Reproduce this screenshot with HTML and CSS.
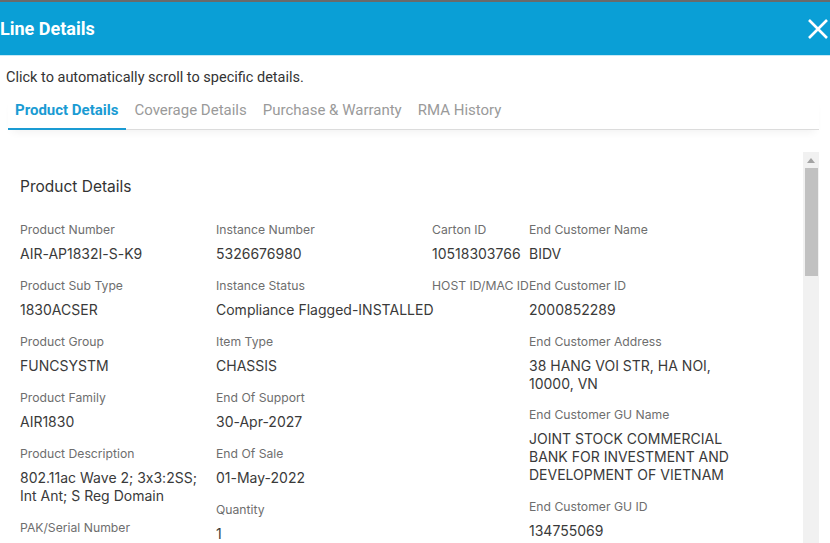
FILE: index.html
```html
<!DOCTYPE html>
<html>
<head>
<meta charset="utf-8">
<link rel="stylesheet" href="styles.css">
</head>
<body>
<div class="topbar"></div>
<header class="header">
  <h1 class="title">Line Details</h1>
  <svg class="close" width="22" height="22" viewBox="0 0 22 22"><path d="M2 2 L20 20 M20 2 L2 20" stroke="#fff" stroke-width="2.6" fill="none"/></svg>
</header>
<p class="intro">Click to automatically scroll to specific details.</p>
<nav class="tabs">
  <span class="tab active">Product Details</span>
  <span class="tab">Coverage Details</span>
  <span class="tab">Purchase &amp; Warranty</span>
  <span class="tab">RMA History</span>
</nav>
<div class="pane">
  <div class="content">
    <h2 class="section">Product Details</h2>
    <div class="grid">
      <div class="col c1">
        <div class="item"><div class="label">Product Number</div><div class="value">AIR-AP1832I-S-K9</div></div>
        <div class="item"><div class="label">Product Sub Type</div><div class="value">1830ACSER</div></div>
        <div class="item"><div class="label">Product Group</div><div class="value">FUNCSYSTM</div></div>
        <div class="item"><div class="label">Product Family</div><div class="value">AIR1830</div></div>
        <div class="item"><div class="label">Product Description</div><div class="value">802.11ac Wave 2; 3x3:2SS; Int Ant; S Reg Domain</div></div>
        <div class="item"><div class="label">PAK/Serial Number</div><div class="value"></div></div>
      </div>
      <div class="col c2">
        <div class="item"><div class="label">Instance Number</div><div class="value">5326676980</div></div>
        <div class="item"><div class="label">Instance Status</div><div class="value nowrap">Compliance Flagged-INSTALLED</div></div>
        <div class="item"><div class="label">Item Type</div><div class="value">CHASSIS</div></div>
        <div class="item"><div class="label">End Of Support</div><div class="value">30-Apr-2027</div></div>
        <div class="item"><div class="label">End Of Sale</div><div class="value">01-May-2022</div></div>
        <div class="item"><div class="label">Quantity</div><div class="value">1</div></div>
      </div>
      <div class="col c3">
        <div class="item"><div class="label">Carton ID</div><div class="value">10518303766</div></div>
        <div class="item"><div class="label nowrap">HOST ID/MAC ID</div><div class="value"></div></div>
      </div>
      <div class="col c4">
        <div class="item"><div class="label">End Customer Name</div><div class="value">BIDV</div></div>
        <div class="item"><div class="label">End Customer ID</div><div class="value">2000852289</div></div>
        <div class="item"><div class="label">End Customer Address</div><div class="value">38 HANG VOI STR, HA NOI, 10000, VN</div></div>
        <div class="item"><div class="label">End Customer GU Name</div><div class="value">JOINT STOCK COMMERCIAL BANK FOR INVESTMENT AND DEVELOPMENT OF VIETNAM</div></div>
        <div class="item"><div class="label">End Customer GU ID</div><div class="value">134755069</div></div>
      </div>
    </div>
  </div>
  <div class="scrollbar">
    <div class="sb-up"><svg width="8" height="5" viewBox="0 0 8 5"><path d="M0 5 L4 0 L8 5 Z" fill="#a3a3a3"/></svg></div>
    <div class="sb-thumb"></div>
  </div>
</div>
</body>
</html>
```

FILE: styles.css
```css
html, body {
  margin: 0;
  padding: 0;
  background: #fff;
  font-family: Roboto, "Liberation Sans", Arial, sans-serif;
  overflow: hidden;
  height: 543px;
}
.topbar {
  height: 2px;
  background: #6a6a6a;
}
.header {
  height: 53px;
  background: #0a9fd6;
  border-bottom: 1px solid #c7e9f6;
  display: flex;
  align-items: center;
  justify-content: space-between;
}
.title {
  margin: 0;
  color: #fff;
  font-size: 18px;
  font-weight: 700;
  line-height: 22px;
}
.close {
  margin-right: 1px;
}
.intro {
  margin: 0;
  padding: 13px 6px 0;
  font-size: 14.5px;
  line-height: 17px;
  color: #333;
}
.tabs {
  display: flex;
  margin: 10px 11px 0 8px;
  border-bottom: 1px solid #dcdcdc;
  box-shadow: 0 6px 8px -4px rgba(0,0,0,0.06);
}
.tab {
  padding: 6px 8px 9px 8px;
  font-size: 15px;
  line-height: 17px;
  color: #9a9a9a;
  border-bottom: 2px solid transparent;
  margin-bottom: -1px;
}
.tab.active {
  color: #1a9bd3;
  font-weight: 700;
  padding-left: 7px;
  border-bottom-color: #1a9bd3;
}
.pane {
  display: flex;
  margin: 20px 11px 0 8px;
  height: 400px;
}
.content {
  flex: 1;
  padding: 27px 0 0 12px;
  overflow: hidden;
  font-family: Inter, Roboto, sans-serif;
  font-feature-settings: "calt" 0;
}
.section {
  margin: 0;
  font-size: 15.5px;
  font-weight: 400;
  line-height: 20px;
  color: #333;
}
.grid {
  display: grid;
  grid-template-columns: 196px 216px 97px 210px;
  margin-top: 25px;
}
.col {
  display: flex;
  flex-direction: column;
}
.item {
  margin-bottom: 15px;
}
.label {
  font-size: 12.2px;
  line-height: 16px;
  color: #6e6e6e;
  margin-bottom: 7px;
}
.nowrap {
  white-space: nowrap;
}
.value {
  font-size: 14px;
  line-height: 18px;
  color: #3a3a3a;
  min-height: 18px;
}
.c4 .value {
  line-height: 17.7px;
}
.scrollbar {
  width: 16px;
  background: #f1f1f1;
  display: flex;
  flex-direction: column;
  align-items: center;
  margin-top: 2px;
}
.sb-up {
  height: 16px;
  display: flex;
  align-items: center;
  justify-content: center;
}
.sb-thumb {
  width: 13px;
  height: 108px;
  background: #c1c1c1;
  margin-left: 1px;
}
```
